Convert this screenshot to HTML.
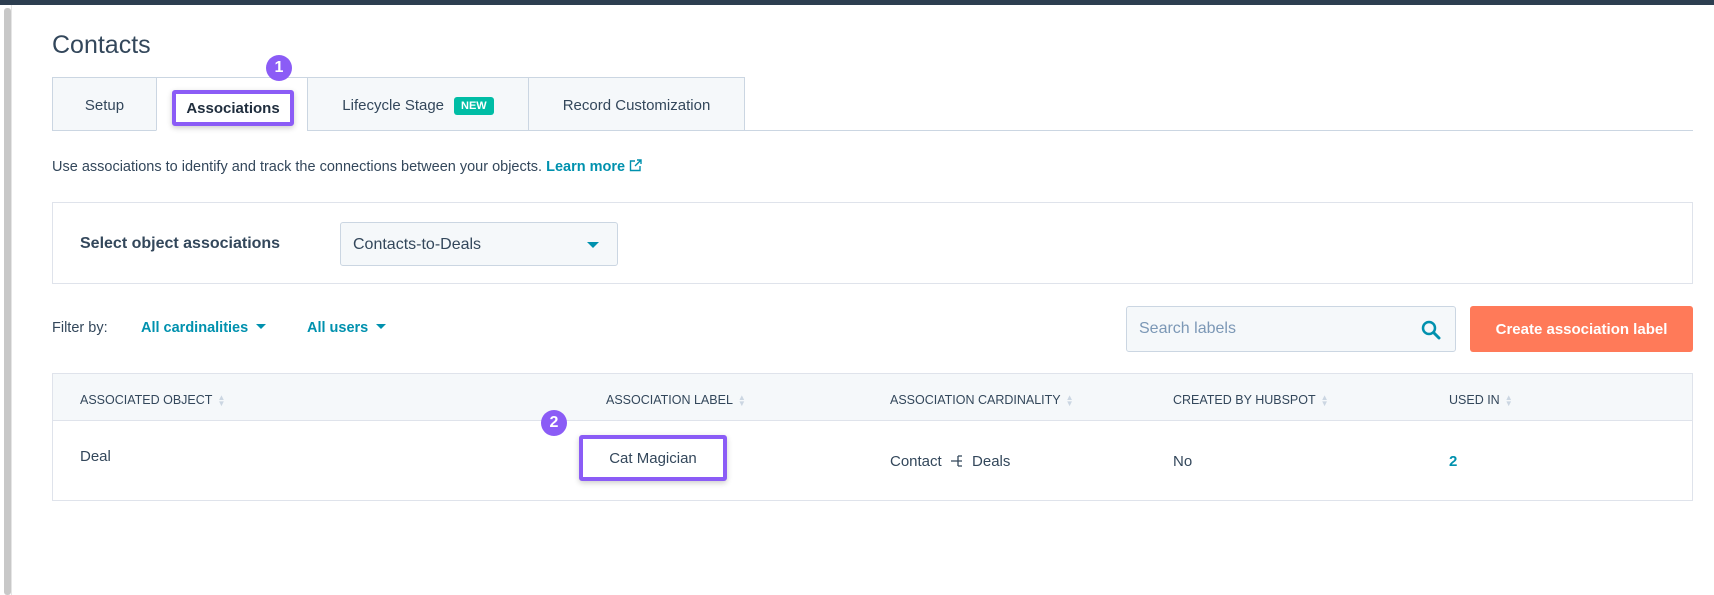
<!DOCTYPE html>
<html><head><meta charset="utf-8"><style>
*{box-sizing:border-box;margin:0;padding:0}
body{width:1714px;height:595px;background:#fff;font-family:"Liberation Sans",sans-serif;color:#33475b;position:relative;overflow:hidden}
.a{position:absolute}
.topbar{left:0;top:0;width:1714px;height:5px;background:#2d3e50}
.scroll{left:4px;top:8px;width:7px;height:587px;background:#c8c8c8;border-radius:3px}
.scroll2{left:11px;top:5px;width:1px;height:590px;background:#e5e5e5}
.tab{top:77px;height:54px;background:#f5f8fa;border:1px solid #cbd6e2;font-size:15px;display:flex;align-items:center;justify-content:center}
.badge{width:26px;height:26px;border-radius:50%;background:#8b5cf6;color:#fff;font-weight:bold;font-size:16px;display:flex;align-items:center;justify-content:center}
.hl{border:4px solid #8b5cf6;border-radius:3px;box-shadow:0 2px 6px rgba(0,0,0,.2)}
.th{font-size:12.5px;top:393px;color:#33475b}
.sort{display:inline-block;margin-left:5px;color:#cbd6e2;font-size:8px;line-height:6px;vertical-align:middle}
.td{font-size:15px;top:449px}
</style></head><body>
<div class="a topbar"></div>
<div class="a scroll"></div>
<div class="a scroll2"></div>
<div class="a" style="left:52px;top:31px;font-size:25px;color:#33475b">Contacts</div>
<div class="a" style="left:52px;top:130px;width:1641px;height:1px;background:#cbd6e2"></div>
<div class="a tab" style="left:52px;width:105px;padding-top:3px">Setup</div>
<div class="a tab" style="left:156px;width:152px;background:#fff;border-bottom-color:#fff"></div>
<div class="a tab" style="left:307px;width:222px;padding-top:3px">Lifecycle Stage <span style="margin-left:10px;background:#00bda5;color:#fff;font-size:11px;font-weight:bold;padding:3px 7px;border-radius:3px">NEW</span></div>
<div class="a tab" style="left:528px;width:217px;padding-top:3px">Record Customization</div>
<div class="a hl" style="left:172px;top:90px;width:122px;height:36px;background:#fff;display:flex;align-items:center;justify-content:center;font-size:15px;color:#1f2d3d;font-weight:bold">Associations</div>
<div class="a badge" style="left:266px;top:55px">1</div>
<div class="a" style="left:52px;top:159px;font-size:14.5px">Use associations to identify and track the connections between your objects. <span style="color:#0091ae;font-weight:bold">Learn more</span> <svg width="13" height="13" viewBox="0 0 13 13" style="vertical-align:-1px"><path d="M6 2H1.5v9.5H11V7M8 1h4v4M12 1L6 7" fill="none" stroke="#0091ae" stroke-width="1.4"/></svg></div>
<div class="a" style="left:52px;top:202px;width:1641px;height:82px;border:1px solid #dfe3eb"></div>
<div class="a" style="left:80px;top:235px;font-size:16px;font-weight:bold">Select object associations</div>
<div class="a" style="left:340px;top:222px;width:278px;height:44px;background:#f5f8fa;border:1px solid #cbd6e2;border-radius:3px;font-size:16px;padding:13px 12px">Contacts-to-Deals<span class="a" style="right:18px;top:19px;width:0;height:0;border-left:6px solid transparent;border-right:6px solid transparent;border-top:6px solid #0091ae"></span></div>
<div class="a" style="left:52px;top:320px;font-size:14.5px">Filter by:</div>
<div class="a" style="left:141px;top:320px;font-size:14.5px;color:#0091ae;font-weight:bold">All cardinalities <span style="display:inline-block;margin-left:4px;border-left:5px solid transparent;border-right:5px solid transparent;border-top:5px solid #0091ae;vertical-align:3px"></span></div>
<div class="a" style="left:307px;top:320px;font-size:14.5px;color:#0091ae;font-weight:bold">All users <span style="display:inline-block;margin-left:4px;border-left:5px solid transparent;border-right:5px solid transparent;border-top:5px solid #0091ae;vertical-align:3px"></span></div>
<div class="a" style="left:1126px;top:306px;width:330px;height:46px;background:#f5f8fa;border:1px solid #cbd6e2;border-radius:3px;font-size:16px;color:#7c98b6;padding:13px 12px">Search labels
<svg class="a" style="right:14px;top:13px" width="20" height="20" viewBox="0 0 20 20"><circle cx="8" cy="8" r="6" fill="none" stroke="#0091ae" stroke-width="2.5"/><path d="M12.5 12.5L18 18" stroke="#0091ae" stroke-width="3" stroke-linecap="round"/></svg></div>
<div class="a" style="left:1470px;top:306px;width:223px;height:46px;background:#ff7a59;border-radius:3px;color:#fff;font-size:15px;font-weight:bold;display:flex;align-items:center;justify-content:center">Create association label</div>
<div class="a" style="left:52px;top:373px;width:1641px;height:128px;border:1px solid #dfe3eb"></div>
<div class="a" style="left:53px;top:374px;width:1639px;height:47px;background:#f5f8fa;border-bottom:1px solid #dfe3eb"></div>
<div class="a th" style="left:80px">ASSOCIATED OBJECT<span class="sort">▲<br>▼</span></div>
<div class="a th" style="left:606px">ASSOCIATION LABEL<span class="sort">▲<br>▼</span></div>
<div class="a th" style="left:890px">ASSOCIATION CARDINALITY<span class="sort">▲<br>▼</span></div>
<div class="a th" style="left:1173px">CREATED BY HUBSPOT<span class="sort">▲<br>▼</span></div>
<div class="a th" style="left:1449px">USED IN<span class="sort">▲<br>▼</span></div>
<div class="a td" style="left:80px;top:448px">Deal</div>
<div class="a hl" style="left:579px;top:435px;width:148px;height:46px;background:#fff;display:flex;align-items:center;justify-content:center;font-size:15px">Cat Magician</div>
<div class="a badge" style="left:541px;top:410px">2</div>
<div class="a td" style="left:890px;top:453px">Contact <svg width="14" height="14" viewBox="0 0 14 14" style="vertical-align:-2px;margin:0 4px"><path d="M1 7h7M8 2v10M8 2h4M8 7h4M8 12h4" stroke="#33475b" stroke-width="1.3" fill="none"/></svg> Deals</div>
<div class="a td" style="left:1173px;top:453px">No</div>
<div class="a td" style="left:1449px;top:453px;color:#0091ae;font-weight:bold">2</div>
</body></html>
